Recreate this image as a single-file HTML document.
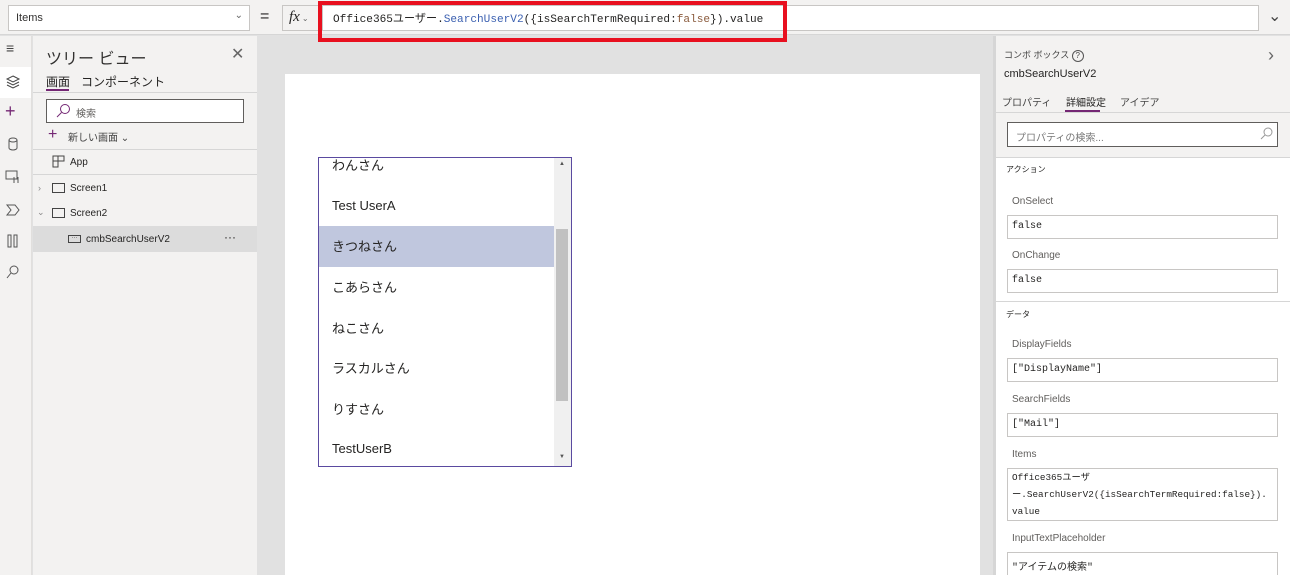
<!DOCTYPE html>
<html><head><meta charset="utf-8"><style>
*{box-sizing:border-box;margin:0;padding:0}
html,body{width:1290px;height:575px;overflow:hidden}
body{position:relative;background:#e1e1e1;font-family:"Liberation Sans","Noto Sans CJK JP",sans-serif;color:#252423;font-size:12px}
.a{position:absolute}
.mono{font-family:"Liberation Mono","Noto Sans CJK JP",monospace}
.lbl{position:absolute;left:1012px;font-size:10px;color:#605e5c}
.box{position:absolute;left:1007px;width:271px;height:24px;border:1px solid #c8c6c4;background:#fff;font-size:10px;padding:5px 4px;font-family:"Liberation Mono","Noto Sans CJK JP",monospace;color:#252423;white-space:nowrap;overflow:hidden}
.row{position:absolute;left:13px;font-size:13px;color:#252423}
</style></head><body>
<!-- top bar -->
<div class="a" style="left:0;top:0;width:1290px;height:35px;background:#f3f2f1;border-bottom:1px solid #d6d6d6"></div>
<div class="a" style="left:8px;top:5px;width:242px;height:26px;background:#fff;border:1px solid #c8c6c4;font-size:11px;padding:6px 7px;color:#323130">Items<span class="a" style="right:6px;top:4px;color:#666;font-size:10px">&#8964;</span></div>
<div class="a" style="left:260px;top:8px;font-size:16px">=</div>
<div class="a" style="left:282px;top:5px;width:38px;height:26px;background:#f3f2f1;border:1px solid #c8c6c4;font-family:'Liberation Serif',serif;font-style:italic;font-size:15px;padding:3px 6px;white-space:nowrap">fx<span style="font-size:8px;font-style:normal;color:#666"> &#8964;</span></div>
<div class="a" style="left:322px;top:5px;width:937px;height:26px;background:#fff;border:1px solid #c8c6c4"></div>
<div class="a" style="left:318px;top:1px;width:469px;height:41px;border:4px solid #e8101f"></div>
<div class="a mono" style="left:333px;top:10px;font-size:11.1px;color:#252423;white-space:nowrap">Office365ユーザー.<span style="color:#3a5fb0">SearchUserV2</span>({isSearchTermRequired:<span style="color:#8a5a3c">false</span>}).value</div>
<div class="a" style="left:1268px;top:6px;font-size:16px;color:#444">&#8964;</div>
<!-- left rail -->
<div class="a" style="left:0;top:36px;width:32px;height:539px;background:#f3f2f1;border-right:1px solid #e1dfdd"></div>
<div class="a" style="left:0;top:67px;width:31px;height:31px;background:#fff"></div>
<div class="a" style="left:6px;top:40px;font-size:14px;color:#444">≡</div>
<svg class="a" style="left:5px;top:74px" width="16" height="16" fill="none" stroke="#444"><path d="M8 2 L14 5 L8 8 L2 5 Z M2 8 L8 11 L14 8 M2 11 L8 14 L14 11"/></svg>
<div class="a" style="left:5px;top:101px;font-size:18px;color:#742774">+</div>
<svg class="a" style="left:6px;top:137px" width="14" height="14" fill="none" stroke="#555"><ellipse cx="7" cy="3" rx="4" ry="2"/><path d="M3 3v8c0 1 1.8 2 4 2s4-1 4-2V3"/></svg>
<svg class="a" style="left:5px;top:169px" width="16" height="16" fill="none" stroke="#555"><rect x="1" y="2" width="11" height="8"/><path d="M9 8v6M13 8v6"/></svg>
<svg class="a" style="left:5px;top:203px" width="16" height="14" fill="none" stroke="#555"><path d="M2 2h8l4 5-4 5H2l4-5z"/></svg>
<svg class="a" style="left:6px;top:233px" width="14" height="16" fill="none" stroke="#555"><rect x="2" y="2" width="3" height="12"/><rect x="8" y="2" width="3" height="12"/></svg>
<svg class="a" style="left:6px;top:265px" width="14" height="14" fill="none" stroke="#555"><circle cx="8" cy="5" r="4"/><path d="M5 8 1 13"/></svg>
<!-- tree panel -->
<div class="a" style="left:33px;top:36px;width:224px;height:539px;background:#f3f2f1"></div>
<div class="a" style="left:46px;top:45px;font-size:16px;color:#323130">ツリー ビュー</div>
<div class="a" style="left:231px;top:44px;font-size:16px;color:#666">✕</div>
<div class="a" style="left:46px;top:73px;font-size:12px">画面</div>
<div class="a" style="left:46px;top:89px;width:23px;height:2px;background:#742774"></div>
<div class="a" style="left:81px;top:73px;font-size:12px">コンポーネント</div>
<div class="a" style="left:33px;top:92px;width:224px;height:1px;background:#d6d6d6"></div>
<div class="a" style="left:46px;top:99px;width:198px;height:24px;background:#fff;border:1px solid #605e5c"></div>
<svg class="a" style="left:55px;top:103px" width="16" height="16" fill="none" stroke="#742774"><circle cx="10" cy="6" r="4.5"/><path d="M6.5 9.5 2 14"/></svg>
<div class="a" style="left:76px;top:105px;font-size:10px;color:#605e5c">検索</div>
<div class="a" style="left:48px;top:126px;font-size:16px;color:#742774">+</div>
<div class="a" style="left:68px;top:129px;font-size:10px;color:#444">新しい画面 &#8964;</div>
<div class="a" style="left:33px;top:149px;width:224px;height:1px;background:#d6d6d6"></div>
<svg class="a" style="left:52px;top:155px" width="13" height="13" fill="none" stroke="#444"><path d="M1 1h11v5H1zM6 1v11H1V6"/></svg>
<div class="a" style="left:70px;top:157px;font-size:10px">App</div>
<div class="a" style="left:33px;top:174px;width:224px;height:1px;background:#d6d6d6"></div>
<div class="a" style="left:38px;top:183px;font-size:9px;color:#888">›</div>
<div class="a" style="left:52px;top:183px;width:13px;height:10px;border:1px solid #444"></div>
<div class="a" style="left:70px;top:183px;font-size:10px">Screen1</div>
<div class="a" style="left:37px;top:207px;font-size:9px;color:#888">⌄</div>
<div class="a" style="left:52px;top:208px;width:13px;height:10px;border:1px solid #444"></div>
<div class="a" style="left:70px;top:208px;font-size:10px">Screen2</div>
<div class="a" style="left:33px;top:226px;width:224px;height:26px;background:#dcdcdc"></div>
<div class="a" style="left:68px;top:235px;width:13px;height:8px;border:1px solid #444;font-size:6px;line-height:4px;text-align:center">···</div>
<div class="a" style="left:86px;top:234px;font-size:10px">cmbSearchUserV2</div>
<div class="a" style="left:224px;top:230px;font-size:12px">···</div>
<!-- canvas -->
<div class="a" style="left:285px;top:74px;width:695px;height:501px;background:#fff"></div>
<div class="a" style="left:318px;top:157px;width:254px;height:310px;border:1px solid #5a4aa0;background:#fff;overflow:hidden">
 <div class="row" style="top:-3px">わんさん</div>
 <div class="row" style="top:40px">Test UserA</div>
 <div class="a" style="left:0;top:68px;width:235px;height:41px;background:#c0c7de"></div>
 <div class="row" style="top:78px">きつねさん</div>
 <div class="row" style="top:119px">こあらさん</div>
 <div class="row" style="top:160px">ねこさん</div>
 <div class="row" style="top:200px">ラスカルさん</div>
 <div class="row" style="top:241px">りすさん</div>
 <div class="row" style="top:283px">TestUserB</div>
 <div class="a" style="left:235px;top:0;width:17px;height:308px;background:#f0f0f0"></div>
 <div class="a" style="left:237px;top:71px;width:12px;height:172px;background:#c1c1c1"></div>
 <div class="a" style="left:240px;top:3px;font-size:6px;color:#555">▲</div>
 <div class="a" style="left:240px;top:296px;font-size:6px;color:#555">▼</div>
</div>
<!-- right panel -->
<div class="a" style="left:993px;top:36px;width:297px;height:539px;background:#fff;border-left:3px solid #d6d6d6"></div>
<div class="a" style="left:996px;top:36px;width:294px;height:122px;background:#f3f2f1"></div>
<div class="a" style="left:1004px;top:48px;font-size:9px;color:#444">コンボ ボックス <span style="display:inline-block;width:12px;height:12px;border:1px solid #555;border-radius:50%;text-align:center;font-size:8px;line-height:10px">?</span></div>
<div class="a" style="left:1268px;top:45px;font-size:18px;color:#666">›</div>
<div class="a" style="left:1004px;top:68px;font-size:11px">cmbSearchUserV2</div>
<div class="a" style="left:1002px;top:94px;font-size:10px;color:#444">プロパティ</div>
<div class="a" style="left:1066px;top:94px;font-size:10px">詳細設定</div>
<div class="a" style="left:1065px;top:110px;width:35px;height:2px;background:#742774"></div>
<div class="a" style="left:1120px;top:94px;font-size:10px;color:#444">アイデア</div>
<div class="a" style="left:996px;top:112px;width:294px;height:1px;background:#d6d6d6"></div>
<div class="a" style="left:1007px;top:122px;width:271px;height:25px;background:#fff;border:1px solid #605e5c;font-size:10px;color:#777;padding:6px 8px">プロパティの検索...</div>
<svg class="a" style="left:1259px;top:127px" width="14" height="14" fill="none" stroke="#999"><circle cx="9" cy="5" r="4"/><path d="M6 8 2 12"/></svg>
<div class="a" style="left:996px;top:157px;width:294px;height:1px;background:#d6d6d6"></div>
<div class="a" style="left:1006px;top:164px;font-size:8px">アクション</div>
<div class="lbl" style="top:196px">OnSelect</div>
<div class="box" style="top:215px">false</div>
<div class="lbl" style="top:250px">OnChange</div>
<div class="box" style="top:269px">false</div>
<div class="a" style="left:996px;top:301px;width:294px;height:1px;background:#d6d6d6"></div>
<div class="a" style="left:1006px;top:309px;font-size:8px">データ</div>
<div class="lbl" style="top:339px">DisplayFields</div>
<div class="box" style="top:358px">["DisplayName"]</div>
<div class="lbl" style="top:394px">SearchFields</div>
<div class="box" style="top:413px">["Mail"]</div>
<div class="lbl" style="top:449px">Items</div>
<div class="box" style="top:468px;height:53px;line-height:17px;padding:0 4px;font-size:9.3px">Office365ユーザ<br>ー.SearchUserV2({isSearchTermRequired:false}).<br>value</div>
<div class="lbl" style="top:533px">InputTextPlaceholder</div>
<div class="box" style="top:552px;height:30px">"アイテムの検索"</div>
</body></html>
